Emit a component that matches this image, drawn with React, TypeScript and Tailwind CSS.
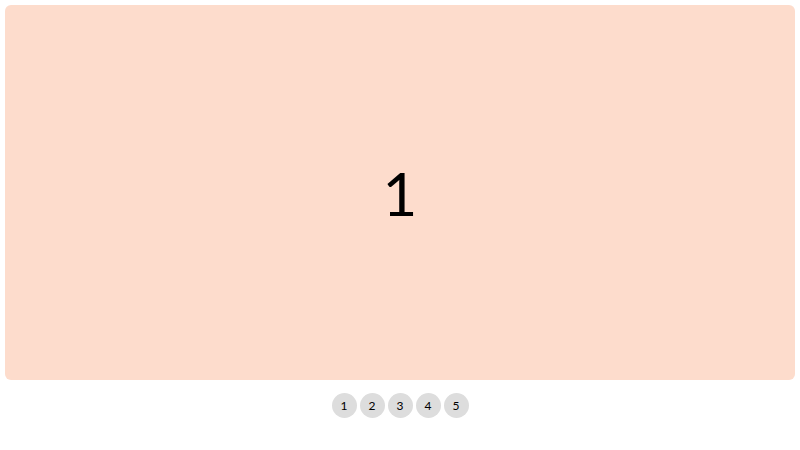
import React, { useState } from 'react';

const SLIDES = [1, 2, 3, 4, 5];

export default function App() {
  const [current, setCurrent] = useState(1);

  return (
    <div className="w-[800px] h-[450px] bg-white p-[5px]" style={{ fontFamily: 'Lato, sans-serif' }}>
      {/* Slide */}
      <div className="h-[375px] rounded-md bg-[#fddccc] flex items-center justify-center">
        <span className="text-[60px] leading-none text-black">{current}</span>
      </div>

      {/* Pager */}
      <div className="mt-[13px] flex justify-center gap-[3px]">
        {SLIDES.map((n) => (
          <button
            key={n}
            onClick={() => setCurrent(n)}
            className="w-[25px] h-[25px] rounded-full bg-[#dddddd] text-[12px] text-black flex items-center justify-center"
          >
            {n}
          </button>
        ))}
      </div>
    </div>
  );
}
